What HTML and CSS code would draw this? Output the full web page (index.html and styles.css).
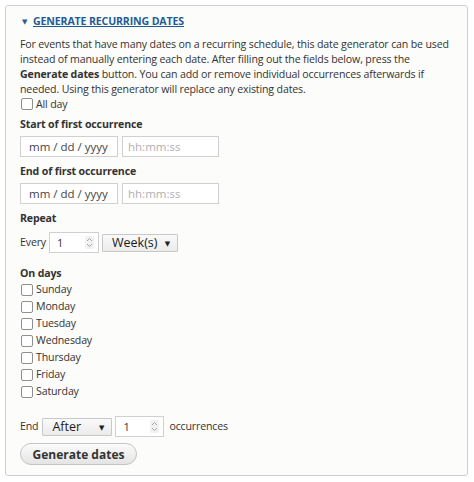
FILE: index.html
```html
<!DOCTYPE html>
<html>
<head>
<meta charset="utf-8">
<link rel="stylesheet" href="styles.css">
</head>
<body>
<div class="panel">
  <div class="legend"><span class="tri">▼</span><a class="legend-link">GENERATE RECURRING DATES</a></div>
  <p class="desc">For events that have many dates on a recurring schedule, this date generator can be used instead of manually entering each date. After filling out the fields below, press the <b>Generate dates</b> button. You can add or remove individual occurrences afterwards if needed. Using this generator will replace any existing dates.</p>
  <label class="check allday"><span class="box"></span>All day</label>
  <div class="label">Start of first occurrence</div>
  <div class="row dt">
    <span class="input date">mm / dd / yyyy</span>
    <span class="input time">hh:mm:ss</span>
  </div>
  <div class="label">End of first occurrence</div>
  <div class="row dt">
    <span class="input date">mm / dd / yyyy</span>
    <span class="input time">hh:mm:ss</span>
  </div>
  <div class="label">Repeat</div>
  <div class="row inline every">
    <span class="txt">Every</span>
    <span class="input num">1<span class="spin"><svg width="9" height="13" viewBox="0 0 9 13"><rect x="0" y="0" width="9" height="13" rx="2" fill="#f1f1f1"/><path d="M2 5 L4.5 2.5 L7 5 M2 8 L4.5 10.5 L7 8" fill="none" stroke="#a8a8a8" stroke-width="1"/></svg></span></span>
    <span class="select week">Week(s)<span class="arrow">▼</span></span>
  </div>
  <div class="label ondays">On days</div>
  <div class="days">
    <label class="check"><span class="box"></span>Sunday</label>
    <label class="check"><span class="box"></span>Monday</label>
    <label class="check"><span class="box"></span>Tuesday</label>
    <label class="check"><span class="box"></span>Wednesday</label>
    <label class="check"><span class="box"></span>Thursday</label>
    <label class="check"><span class="box"></span>Friday</label>
    <label class="check"><span class="box"></span>Saturday</label>
  </div>
  <div class="row inline end">
    <span class="txt">End</span>
    <span class="select after">After<span class="arrow">▼</span></span>
    <span class="input num">1<span class="spin"><svg width="9" height="13" viewBox="0 0 9 13"><rect x="0" y="0" width="9" height="13" rx="2" fill="#f1f1f1"/><path d="M2 5 L4.5 2.5 L7 5 M2 8 L4.5 10.5 L7 8" fill="none" stroke="#a8a8a8" stroke-width="1"/></svg></span></span>
    <span class="txt occ">occurrences</span>
  </div>
  <div class="btnrow"><span class="button">Generate dates</span></div>
</div>
</body>
</html>
```
FILE: styles.css
```css
html, body { margin: 0; padding: 0; background: #fff; }
body {
  padding: 5px 6px 0 5px;
  font-family: "Open Sans", "DejaVu Sans", sans-serif;
  font-size: 10.6px;
  letter-spacing: -0.15px;
  line-height: 15px;
  color: #333;
}
.panel {
  box-sizing: border-box;
  width: 463px;
  height: 471px;
  border: 1px solid #cfcfcf;
  border-radius: 3px;
  background: #fcfcfa;
  padding: 8px 14px 0 14px;
}
.legend {
  display: flex;
  align-items: center;
  height: 15px;
  font-weight: bold;
}
.tri { font-size: 7px; color: #2a5d8f; width: 11px; margin-left: 2px; }
.legend-link { color: #1f5c97; text-decoration: underline; }
.desc {
  margin: 8px 0 0 0;
  line-height: 15px;
  color: #333;
}
.desc b { font-weight: bold; }
.check {
  display: flex;
  align-items: center;
  height: 17px;
  color: #333;
}
.allday { height: 14px; margin-top: 0; }
.box {
  box-sizing: border-box;
  width: 12px; height: 12px;
  border: 1px solid #8f8f8f;
  border-radius: 2px;
  background: #fff;
  margin: 0 3px 0 1px;
}
.label {
  font-weight: bold;
  margin-top: 6px;
  height: 15px;
  line-height: 15px;
  color: #333;
}
.row { display: flex; align-items: center; }
.dt { margin-top: 4px; }
.input {
  box-sizing: border-box;
  display: flex;
  align-items: center;
  height: 21px;
  border: 1px solid #d0d0d0;
  background: #fff;
  font-size: 11.5px;
  letter-spacing: 0;
}
.dt + .label { margin-top: 7px; }
.date { width: 98px; padding-left: 8px; color: #444; }
.time { width: 97px; padding-left: 5px; color: #b0b0b0; margin-left: 4px; }
.every { margin-top: 6px; height: 21px; }
.txt { color: #333; }
.num {
  width: 50px;
  padding-left: 7px;
  height: 21px;
  position: relative;
  color: #333;
  font-size: 11px;
}
.spin {
  position: absolute;
  right: 4px; top: 3px;
  display: flex;
}
.inline .num { margin-left: 3px; }
.select {
  box-sizing: border-box;
  display: flex;
  align-items: center;
  height: 18px;
  border: 1px solid #c8c8c8;
  border-radius: 1px;
  background: linear-gradient(#fafafa, #ebebeb);
  font-size: 12.5px;
  letter-spacing: 0;
  color: #1a1a1a;
  padding-left: 9px;
  position: relative;
}
.arrow { position: absolute; right: 7px; top: 5px; font-size: 7px; line-height: 7px; color: #222; }
.week { width: 76px; margin-left: 3px; }
.after { width: 70px; margin-left: 4px; }
.ondays { margin-top: 13px; }
.days .check { height: 17px; }
.end { margin-top: 16px; height: 21px; }
.end .num { margin-left: 3px; width: 49px; }
.occ { margin-left: 5px; }
.btnrow { margin-top: 6px; display: flex; }
.button {
  box-sizing: border-box;
  display: flex;
  align-items: center;
  justify-content: center;
  width: 117px;
  height: 22px;
  border: 1px solid #c4c4c4;
  border-radius: 12px;
  background: linear-gradient(#fbfbfb, #e4e4e4);
  font-weight: bold;
  font-size: 12px;
  letter-spacing: 0;
  color: #333;
}
```
